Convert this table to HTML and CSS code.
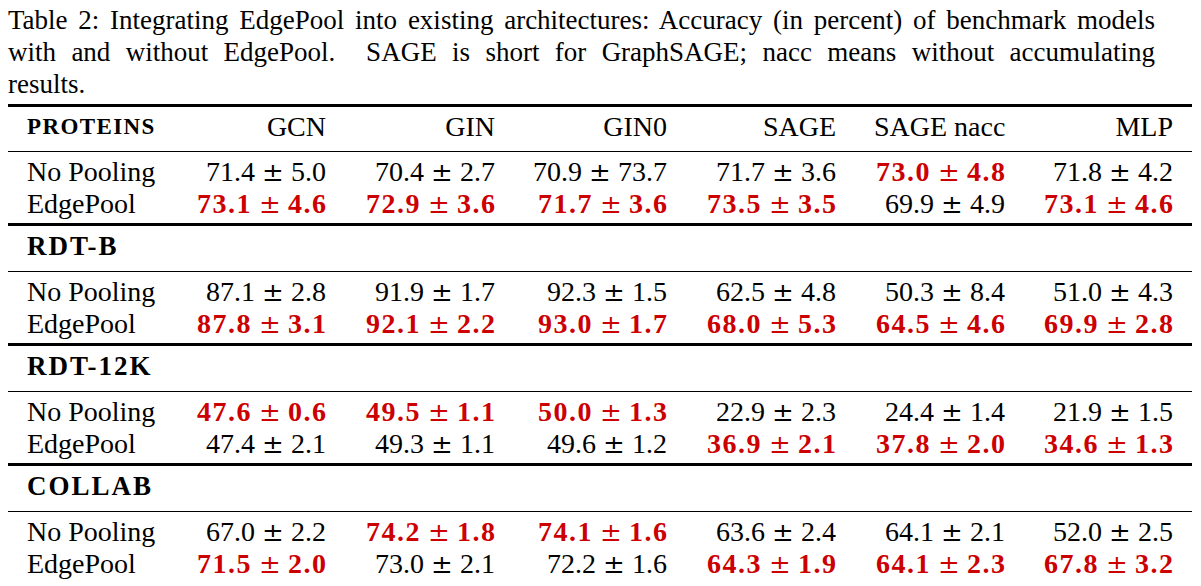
FILE: index.html
```html
<!DOCTYPE html>
<html lang="en">
<head>
<meta charset="utf-8">
<title>Table 2</title>
<link rel="stylesheet" href="styles.css">
</head>
<body>
<div class="page">
  <p class="caption"><span class="line">Table 2: Integrating EdgePool into existing architectures: Accuracy (in percent) of benchmark models</span> <span class="line">with and without EdgePool.&nbsp; SAGE is short for GraphSAGE; nacc means without accumulating</span> <span class="last">results.</span></p>
  <div class="table">
    <div class="row head">
      <div class="cell label sc">PROTEINS</div>
      <div class="cell">GCN</div>
      <div class="cell">GIN</div>
      <div class="cell">GIN0</div>
      <div class="cell">SAGE</div>
      <div class="cell">SAGE nacc</div>
      <div class="cell">MLP</div>
    </div>
    <div class="block">
      <div class="row">
        <div class="cell label">No Pooling</div>
        <div class="cell num">71.4<span class="pm">±</span>5.0</div>
        <div class="cell num">70.4<span class="pm">±</span>2.7</div>
        <div class="cell num">70.9<span class="pm">±</span>73.7</div>
        <div class="cell num">71.7<span class="pm">±</span>3.6</div>
        <div class="cell num best">73.0<span class="pm">±</span>4.8</div>
        <div class="cell num">71.8<span class="pm">±</span>4.2</div>
      </div>
      <div class="row">
        <div class="cell label">EdgePool</div>
        <div class="cell num best">73.1<span class="pm">±</span>4.6</div>
        <div class="cell num best">72.9<span class="pm">±</span>3.6</div>
        <div class="cell num best">71.7<span class="pm">±</span>3.6</div>
        <div class="cell num best">73.5<span class="pm">±</span>3.5</div>
        <div class="cell num">69.9<span class="pm">±</span>4.9</div>
        <div class="cell num best">73.1<span class="pm">±</span>4.6</div>
      </div>
    </div>

    <div class="section">RDT-B</div>
    <div class="block">
      <div class="row">
        <div class="cell label">No Pooling</div>
        <div class="cell num">87.1<span class="pm">±</span>2.8</div>
        <div class="cell num">91.9<span class="pm">±</span>1.7</div>
        <div class="cell num">92.3<span class="pm">±</span>1.5</div>
        <div class="cell num">62.5<span class="pm">±</span>4.8</div>
        <div class="cell num">50.3<span class="pm">±</span>8.4</div>
        <div class="cell num">51.0<span class="pm">±</span>4.3</div>
      </div>
      <div class="row">
        <div class="cell label">EdgePool</div>
        <div class="cell num best">87.8<span class="pm">±</span>3.1</div>
        <div class="cell num best">92.1<span class="pm">±</span>2.2</div>
        <div class="cell num best">93.0<span class="pm">±</span>1.7</div>
        <div class="cell num best">68.0<span class="pm">±</span>5.3</div>
        <div class="cell num best">64.5<span class="pm">±</span>4.6</div>
        <div class="cell num best">69.9<span class="pm">±</span>2.8</div>
      </div>
    </div>

    <div class="section">RDT-12K</div>
    <div class="block">
      <div class="row">
        <div class="cell label">No Pooling</div>
        <div class="cell num best">47.6<span class="pm">±</span>0.6</div>
        <div class="cell num best">49.5<span class="pm">±</span>1.1</div>
        <div class="cell num best">50.0<span class="pm">±</span>1.3</div>
        <div class="cell num">22.9<span class="pm">±</span>2.3</div>
        <div class="cell num">24.4<span class="pm">±</span>1.4</div>
        <div class="cell num">21.9<span class="pm">±</span>1.5</div>
      </div>
      <div class="row">
        <div class="cell label">EdgePool</div>
        <div class="cell num">47.4<span class="pm">±</span>2.1</div>
        <div class="cell num">49.3<span class="pm">±</span>1.1</div>
        <div class="cell num">49.6<span class="pm">±</span>1.2</div>
        <div class="cell num best">36.9<span class="pm">±</span>2.1</div>
        <div class="cell num best">37.8<span class="pm">±</span>2.0</div>
        <div class="cell num best">34.6<span class="pm">±</span>1.3</div>
      </div>
    </div>

    <div class="section">COLLAB</div>
    <div class="block">
      <div class="row">
        <div class="cell label">No Pooling</div>
        <div class="cell num">67.0<span class="pm">±</span>2.2</div>
        <div class="cell num best">74.2<span class="pm">±</span>1.8</div>
        <div class="cell num best">74.1<span class="pm">±</span>1.6</div>
        <div class="cell num">63.6<span class="pm">±</span>2.4</div>
        <div class="cell num">64.1<span class="pm">±</span>2.1</div>
        <div class="cell num">52.0<span class="pm">±</span>2.5</div>
      </div>
      <div class="row">
        <div class="cell label">EdgePool</div>
        <div class="cell num best">71.5<span class="pm">±</span>2.0</div>
        <div class="cell num">73.0<span class="pm">±</span>2.1</div>
        <div class="cell num">72.2<span class="pm">±</span>1.6</div>
        <div class="cell num best">64.3<span class="pm">±</span>1.9</div>
        <div class="cell num best">64.1<span class="pm">±</span>2.3</div>
        <div class="cell num best">67.8<span class="pm">±</span>3.2</div>
      </div>
    </div>
  </div>
</div>
</body>
</html>
```
FILE: styles.css
```css
html, body {
  margin: 0;
  padding: 0;
  background: #ffffff;
}

body {
  font-family: "Liberation Serif", "Times New Roman", serif;
  color: #000000;
  overflow: hidden;
}

.page {
  padding: 4px 9px 0 8px;
}

.caption {
  margin: 0 0 4px 0;
  width: 1147px;
  font-size: 27px;
  line-height: 32px;
  text-align: justify;
}

.caption .line {
  display: block;
  text-align: justify;
  text-align-last: justify;
}

.caption .last {
  display: block;
  text-align: left;
}

.table {
  width: 1184px;
}

.row {
  display: grid;
  grid-template-columns: 168px 169px 169px 172px 169px 169px 168px;
  font-size: 28px;
  line-height: 32px;
}

.cell {
  padding: 0 19px;
  text-align: right;
  white-space: nowrap;
}

.cell.label {
  text-align: left;
}

.head {
  border-top: 3px solid #000000;
  border-bottom: 1px solid #000000;
  padding: 4px 0 8px;
}

.sc {
  font-weight: bold;
  font-size: 23px;
  letter-spacing: 1.4px;
}

.section {
  border-top: 3px solid #000000;
  border-bottom: 1px solid #000000;
  padding: 4px 19px 9px;
  font-size: 27px;
  line-height: 32px;
  font-weight: bold;
  letter-spacing: 2px;
}

.block {
  padding: 4px 0 3px;
}

.num {
  font-size: 28px;
}

.pm {
  display: inline-block;
  width: 36px;
  text-align: center;
  font-family: "DejaVu Serif", serif;
  font-weight: normal;
  font-size: 26px;
  letter-spacing: 0;
}

.best {
  color: #cc0000;
  font-weight: bold;
  letter-spacing: 1.5px;
  margin-right: -1.5px;
}
```
